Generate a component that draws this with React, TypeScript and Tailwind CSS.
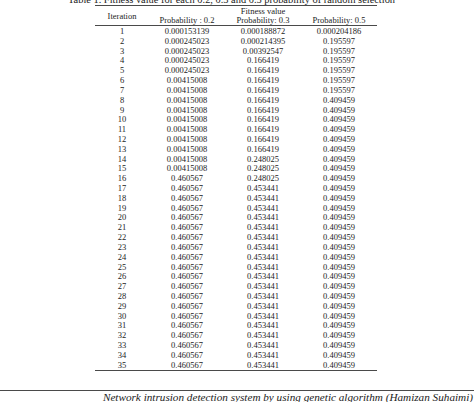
import React from "react";

const rows: [string, string, string][] = [
  ["0.000153139", "0.000188872", "0.000204186"],
  ["0.000245023", "0.000214395", "0.195597"],
  ["0.000245023", "0.00392547", "0.195597"],
  ["0.000245023", "0.166419", "0.195597"],
  ["0.000245023", "0.166419", "0.195597"],
  ["0.00415008", "0.166419", "0.195597"],
  ["0.00415008", "0.166419", "0.195597"],
  ["0.00415008", "0.166419", "0.409459"],
  ["0.00415008", "0.166419", "0.409459"],
  ["0.00415008", "0.166419", "0.409459"],
  ["0.00415008", "0.166419", "0.409459"],
  ["0.00415008", "0.166419", "0.409459"],
  ["0.00415008", "0.166419", "0.409459"],
  ["0.00415008", "0.248025", "0.409459"],
  ["0.00415008", "0.248025", "0.409459"],
  ["0.460567", "0.248025", "0.409459"],
  ...Array.from({ length: 19 }, () => ["0.460567", "0.453441", "0.409459"] as [string, string, string]),
];

export default function App() {
  return (
    <div className="w-[474px] h-[402px] overflow-hidden bg-white text-[#1c1c1c] font-['Liberation_Serif','Times_New_Roman',serif]">
      <div className="-mt-[5px] h-[10px] pr-[11px] text-center text-[10.4px] leading-[10px] whitespace-nowrap">
        Table 1. Fitness value for each 0.2, 0.3 and 0.5 probability of random selection
      </div>
      <div className="ml-[95px] w-[282px] border-t border-b border-[#4a4a4a] text-[8.5px]">
        <div className="grid grid-cols-[54px_76px_76px_76px] border-b border-[#4a4a4a]">
          <div className="row-span-2 flex items-center justify-center leading-[10px]">Iteration</div>
          <div className="col-span-3 h-[10px] text-center leading-[10px]">Fitness value</div>
          <div className="h-[9px] text-center leading-[9px]">Probability : 0.2</div>
          <div className="h-[9px] text-center leading-[9px]">Probability: 0.3</div>
          <div className="h-[9px] text-center leading-[9px]">Probability: 0.5</div>
        </div>
        <div className="pt-[1px]">
          {rows.map((r, i) => (
            <div key={i} className="grid h-[9.82px] grid-cols-[54px_76px_76px_76px] text-center leading-[9.82px]">
              <div>{i + 1}</div>
              <div>{r[0]}</div>
              <div>{r[1]}</div>
              <div>{r[2]}</div>
            </div>
          ))}
        </div>
      </div>
      <div className="mt-[19px] border-t border-[#4a4a4a]">
        <div className="pr-[1px] pt-[1px] text-right text-[11.2px] italic leading-[11px] whitespace-nowrap">
          Network intrusion detection system by using genetic algorithm (Hamizan Suhaimi)
        </div>
      </div>
    </div>
  );
}
